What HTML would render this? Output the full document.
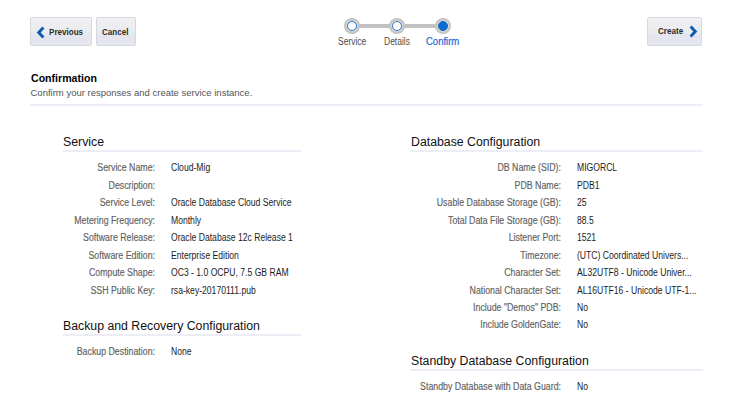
<!DOCTYPE html>
<html><head><meta charset="utf-8">
<style>
*{margin:0;padding:0;box-sizing:border-box}
html,body{width:750px;height:417px;overflow:hidden;background:#fff;font-family:"Liberation Sans",sans-serif;color:#333}
.abs{position:absolute;white-space:nowrap}
.btn{position:absolute;top:17px;height:29px;border:1px solid #d3d9e0;border-radius:2px;background:linear-gradient(#f1f1f4 0%,#ececf0 40%,#e9ecec 50%,#e8eaed 58%,#e5e5ef 64%,#e5e6ef 100%)}
.bt{position:absolute;top:0;font-weight:bold;font-size:9.5px;line-height:27px;color:#2b2b2b;transform:scaleX(0.85);transform-origin:0 0;white-space:nowrap}
.train-line{position:absolute;top:24px;height:4px;background:#c2c2c2}
.dot{position:absolute;width:16px;height:16px;border-radius:50%;background:#c4c4c4}
.dot b{position:absolute;left:2px;top:2px;width:12px;height:12px;border-radius:50%;background:#ddd6d0}
.dot i{position:absolute;left:3px;top:3px;width:10px;height:10px;border-radius:50%;background:#fff;border:1.9px solid #2479d8}
.dot.sel i{background:#0b6dd0;border-color:#0b6dd0}
.tl{position:absolute;top:36px;font-size:10px;line-height:12px;color:#4d4d4d;transform:scaleX(0.85);transform-origin:0 0;white-space:nowrap}
.h1{font-weight:bold;font-size:10.6px;line-height:12px;color:#000}
.sub{font-size:9.5px;line-height:12px;color:#555}
.h2{font-size:12.3px;line-height:14px;color:#111}
.uline{position:absolute;height:2px;background:#ededf5}
.lab{position:absolute;width:300px;font-size:10px;line-height:12px;color:#616161;text-align:right;white-space:nowrap;transform:scaleX(0.88);transform-origin:100% 0;-webkit-text-stroke:0.15px #616161}
.val{position:absolute;font-size:10px;line-height:12px;color:#1c1c1c;white-space:nowrap;transform:scaleX(0.86);transform-origin:0 0}
</style></head><body>

<div class="btn" style="left:30px;width:62px;">
  <svg style="position:absolute;left:4.5px;top:7.5px" width="10" height="13" viewBox="0 0 10 13"><path d="M7.4 1.4 L2.7 6.4 L7.4 11.4" fill="none" stroke="#0a5cb0" stroke-width="2.9"/></svg>
  <span class="bt" style="left:18px;">Previous</span>
</div>
<div class="btn" style="left:96px;width:40px;"><span class="bt" style="left:5px;">Cancel</span></div>
<div class="btn" style="left:647px;width:55px;">
  <span class="bt" style="left:10px;top:-1px">Create</span>
  <svg style="position:absolute;left:40px;top:7px" width="10" height="13" viewBox="0 0 10 13"><path d="M2.6 1.4 L7.3 6.4 L2.6 11.4" fill="none" stroke="#0a5cb0" stroke-width="2.9"/></svg>
</div>

<div class="train-line" style="left:352px;width:91px"></div>
<div class="dot" style="left:343.5px;top:18px"><b></b><i></i></div>
<div class="dot" style="left:389px;top:18px"><b></b><i></i></div>
<div class="dot sel" style="left:435px;top:18px"><b></b><i></i></div>
<div class="tl" style="left:338px">Service</div>
<div class="tl" style="left:384px">Details</div>
<div class="tl" style="left:425.5px;color:#1f66d1;transform:scaleX(0.95);-webkit-text-stroke:0.2px #1f66d1">Confirm</div>

<div class="abs h1" style="left:31px;top:72px">Confirmation</div>
<div class="abs sub" style="left:30.5px;top:87px">Confirm your responses and create service instance.</div>
<div class="uline" style="left:30px;top:104px;width:673px"></div>

<div class="abs h2" style="left:63px;top:135px">Service</div>
<div class="uline" style="left:63px;top:150px;width:238px"></div>

<div class="abs h2" style="left:411px;top:135px">Database Configuration</div>
<div class="uline" style="left:410px;top:150px;width:293px"></div>

<div class="abs h2" style="left:63px;top:319px">Backup and Recovery Configuration</div>
<div class="uline" style="left:63px;top:334px;width:238px"></div>

<div class="abs h2" style="left:411px;top:354px">Standby Database Configuration</div>
<div class="uline" style="left:410px;top:369px;width:293px"></div>

<div class="lab" style="left:-145.0px;top:162px">Service Name:</div><div class="val" style="left:170.5px;top:162px">Cloud-Mig</div>
<div class="lab" style="left:-145.0px;top:180px">Description:</div>
<div class="lab" style="left:-145.0px;top:197px">Service Level:</div><div class="val" style="left:170.5px;top:197px">Oracle Database Cloud Service</div>
<div class="lab" style="left:-145.0px;top:215px">Metering Frequency:</div><div class="val" style="left:170.5px;top:215px">Monthly</div>
<div class="lab" style="left:-145.0px;top:232px">Software Release:</div><div class="val" style="left:170.5px;top:232px">Oracle Database 12c Release 1</div>
<div class="lab" style="left:-145.0px;top:250px">Software Edition:</div><div class="val" style="left:170.5px;top:250px">Enterprise Edition</div>
<div class="lab" style="left:-145.0px;top:267px">Compute Shape:</div><div class="val" style="left:170.5px;top:267px">OC3 - 1.0 OCPU, 7.5 GB RAM</div>
<div class="lab" style="left:-145.0px;top:285px">SSH Public Key:</div><div class="val" style="left:170.5px;top:285px">rsa-key-20170111.pub</div>
<div class="lab" style="left:-145.0px;top:346px">Backup Destination:</div><div class="val" style="left:170.5px;top:346px">None</div>
<div class="lab" style="left:261.0px;top:162px">DB Name (SID):</div><div class="val" style="left:577px;top:162px">MIGORCL</div>
<div class="lab" style="left:261.0px;top:180px">PDB Name:</div><div class="val" style="left:577px;top:180px">PDB1</div>
<div class="lab" style="left:261.0px;top:197px">Usable Database Storage (GB):</div><div class="val" style="left:577px;top:197px">25</div>
<div class="lab" style="left:261.0px;top:215px">Total Data File Storage (GB):</div><div class="val" style="left:577px;top:215px">88.5</div>
<div class="lab" style="left:261.0px;top:232px">Listener Port:</div><div class="val" style="left:577px;top:232px">1521</div>
<div class="lab" style="left:261.0px;top:250px">Timezone:</div><div class="val" style="left:577px;top:250px">(UTC) Coordinated Univers...</div>
<div class="lab" style="left:261.0px;top:267px">Character Set:</div><div class="val" style="left:577px;top:267px">AL32UTF8 - Unicode Univer...</div>
<div class="lab" style="left:261.0px;top:285px">National Character Set:</div><div class="val" style="left:577px;top:285px">AL16UTF16 - Unicode UTF-1...</div>
<div class="lab" style="left:261.0px;top:302px">Include "Demos" PDB:</div><div class="val" style="left:577px;top:302px">No</div>
<div class="lab" style="left:261.0px;top:319px">Include GoldenGate:</div><div class="val" style="left:577px;top:319px">No</div>
<div class="lab" style="left:261.0px;top:381px">Standby Database with Data Guard:</div><div class="val" style="left:577px;top:381px">No</div>

</body></html>
